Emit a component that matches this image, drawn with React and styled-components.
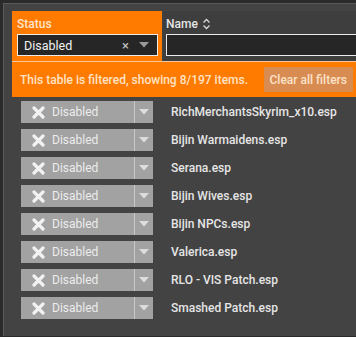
import styled, { createGlobalStyle } from "styled-components";

const plugins = [
  "RichMerchantsSkyrim_x10.esp",
  "Bijin Warmaidens.esp",
  "Serana.esp",
  "Bijin Wives.esp",
  "Bijin NPCs.esp",
  "Valerica.esp",
  "RLO - VIS Patch.esp",
  "Smashed Patch.esp",
];

const GlobalStyle = createGlobalStyle`
  html, body {
    margin: 0;
    padding: 0;
    background: #2a2a2a;
    overflow: hidden;
  }
  body {
    font-family: Roboto, "Liberation Sans", sans-serif;
  }
`;

const CrossIcon = () => (
  <svg width="13" height="13" viewBox="0 0 13 13">
    <path
      d="M2 2 L11 11 M11 2 L2 11"
      stroke="#f2f2f2"
      strokeWidth="3.2"
      strokeLinecap="round"
    />
  </svg>
);

const Caret = ({ color = "#9a9a9a" }) => (
  <svg width="10" height="6" viewBox="0 0 10 6">
    <path d="M0 0 L10 0 L5 5.5 Z" fill={color} />
  </svg>
);

const SortIcon = () => (
  <svg width="9" height="12" viewBox="0 0 9 12">
    <path
      d="M1.5 4.5 L4.5 1.5 L7.5 4.5 M1.5 7.5 L4.5 10.5 L7.5 7.5"
      stroke="#d8d8d8"
      strokeWidth="1.3"
      fill="none"
    />
  </svg>
);

const App = () => {
  return (
    <>
      <GlobalStyle />
      <Panel>
        <Header>
          <StatusCell>
            <HeadLabel>Status</HeadLabel>
            <FilterBox>
              <span>Disabled</span>
              <Clear>×</Clear>
              <Caret />
            </FilterBox>
          </StatusCell>
          <NameCell>
            <HeadLabel light>
              Name <SortIcon />
            </HeadLabel>
            <NameInput />
          </NameCell>
        </Header>
        <Banner>
          <span>This table is filtered, showing 8/197 items.</span>
          <ClearButton>Clear all filters</ClearButton>
        </Banner>
        <Rows>
          {plugins.map((name) => (
            <Row key={name}>
              <StateButton>
                <StateMain>
                  <CrossIcon />
                  <span>Disabled</span>
                </StateMain>
                <StateDrop>
                  <Caret color="#dedede" />
                </StateDrop>
              </StateButton>
              <PluginName>{name}</PluginName>
            </Row>
          ))}
        </Rows>
      </Panel>
    </>
  );
};

export default App;

const Panel = styled.div`
  margin: 3px 0 0 3px;
  border-top: 1px solid #5a5a5a;
  border-left: 1px solid #5a5a5a;
  background: #434343;
  height: 333px;
  padding: 7px 0 0 8px;
  box-sizing: border-box;
`;

const Header = styled.div`
  display: flex;
  height: 50px;
  border-bottom: 1px solid #f6c89c;
`;

const StatusCell = styled.div`
  width: 150px;
  flex: none;
  background: #ff7b00;
  padding: 6px 4px 0 5px;
  box-sizing: border-box;
`;

const NameCell = styled.div`
  flex: 1;
  margin-left: 1px;
  background: #3e3e3e;
  padding: 6px 0 0 3px;
  min-width: 0;
`;

const HeadLabel = styled.div`
  display: flex;
  align-items: center;
  gap: 4px;
  height: 14px;
  font-size: 12px;
  font-weight: 500;
  color: ${(p) => (p.light ? "#e4e4e4" : "#ffe6cc")};
  margin-bottom: 3px;
`;

const FilterBox = styled.div`
  display: flex;
  align-items: center;
  height: 22px;
  width: 141px;
  box-sizing: border-box;
  border: 1px solid #ececec;
  background: #262626;
  padding: 0 8px 0 6px;
  font-size: 12.5px;
  color: #f2f2f2;
  span:first-child {
    flex: 1;
  }
`;

const Clear = styled.span`
  color: #c8c8c8;
  font-size: 13px;
  margin-right: 10px;
`;

const NameInput = styled.div`
  height: 22px;
  box-sizing: border-box;
  border: 1px solid #ececec;
  border-right: none;
  background: #262626;
`;

const Banner = styled.div`
  display: flex;
  align-items: center;
  justify-content: space-between;
  height: 35px;
  background: #ff7b00;
  padding: 0 3px 0 8px;
  font-size: 12px;
  font-weight: 500;
  color: #ffe2c4;
`;

const ClearButton = styled.div`
  height: 25px;
  padding: 0 6px;
  display: flex;
  align-items: center;
  background: #d98c52;
  color: #fbe2c8;
  font-size: 12px;
  font-weight: 500;
`;

const Rows = styled.div`
  display: flex;
  flex-direction: column;
  padding: 1px 0 0 9px;
`;

const Row = styled.div`
  display: flex;
  align-items: center;
  height: 28px;
`;

const StateButton = styled.div`
  display: flex;
  width: 132px;
  height: 22px;
  background: #a2a2a2;
  flex: none;
`;

const StateMain = styled.div`
  display: flex;
  align-items: center;
  gap: 7px;
  width: 114px;
  padding-left: 11px;
  box-sizing: border-box;
  border-right: 1px solid #c9c9c9;
  font-size: 12px;
  color: #ececec;
`;

const StateDrop = styled.div`
  flex: 1;
  display: flex;
  align-items: center;
  justify-content: center;
`;

const PluginName = styled.div`
  margin-left: 18px;
  font-size: 12px;
  font-weight: 500;
  color: #e6e6e6;
  white-space: nowrap;
`;
